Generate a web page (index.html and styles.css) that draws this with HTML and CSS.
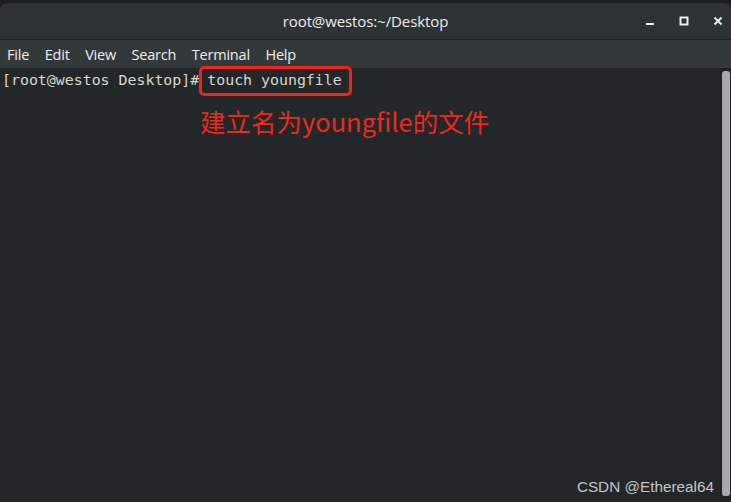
FILE: index.html
```html
<!DOCTYPE html>
<html>
<head>
<meta charset="utf-8">
<link rel="stylesheet" href="styles.css">
</head>
<body>
<div class="window">
  <div class="titlebar">
    <div class="title">root@westos:~/Desktop</div>
    <div class="controls">
      <svg class="ctl" width="14" height="14" viewBox="0 0 14 14"><rect x="3" y="9" width="8" height="2" fill="#eeeeec"/></svg>
      <svg class="ctl" width="14" height="14" viewBox="0 0 14 14"><rect x="3.5" y="3.5" width="7" height="7" fill="none" stroke="#eeeeec" stroke-width="2"/></svg>
      <svg class="ctl" width="14" height="14" viewBox="0 0 14 14"><path d="M3.5 3.5 L10.5 10.5 M10.5 3.5 L3.5 10.5" stroke="#eeeeec" stroke-width="2"/></svg>
    </div>
  </div>
  <div class="menubar">
    <span class="mi">File</span>
    <span class="mi">Edit</span>
    <span class="mi">View</span>
    <span class="mi">Search</span>
    <span class="mi">Terminal</span>
    <span class="mi">Help</span>
  </div>
  <div class="terminal">
    <div class="content">
      <div class="line"><span class="prompt">[root@westos Desktop]#</span><span class="cmd">touch youngfile</span></div>
      <div class="note">建立名为youngfile的文件</div>
    </div>
    <div class="scroll"><div class="thumb"></div></div>
    <div class="watermark">CSDN @Ethereal64</div>
  </div>
</div>
</body>
</html>
```

FILE: styles.css
```css
html, body {
  margin: 0;
  padding: 0;
  background: #1b1d1e;
}
.window {
  width: 731px;
  height: 502px;
  padding-top: 3px;
  box-sizing: border-box;
  display: flex;
  flex-direction: column;
}
.titlebar {
  height: 36px;
  background: #2d3234;
  border-radius: 7px 7px 0 0;
  border-bottom: 1px solid #1c1f20;
  position: relative;
  display: flex;
  align-items: center;
  justify-content: center;
  flex-shrink: 0;
}
.title {
  font-family: "Open Sans", "Noto Sans", sans-serif;
  font-size: 15px;
  color: #eeeeec;
  letter-spacing: -0.1px;
}
.controls {
  position: absolute;
  right: 6px;
  top: 11px;
  display: flex;
  gap: 20px;
}
.ctl { display: block; }
.menubar {
  height: 28px;
  background: #33393b;
  display: flex;
  align-items: center;
  padding-left: 7px;
  flex-shrink: 0;
}
.mi {
  font-family: "Open Sans", "Noto Sans", sans-serif;
  font-size: 14.5px;
  color: #eeeeec;
  margin-right: 15.5px;
  letter-spacing: -0.2px;
}
.terminal {
  flex: 1;
  background: #232729;
  position: relative;
  display: flex;
}
.content {
  flex: 1;
  padding-left: 2px;
}
.line {
  font-family: "DejaVu Sans Mono", monospace;
  font-size: 14.9px;
  color: #d3d7cf;
  line-height: 20px;
  white-space: pre;
  display: flex;
  align-items: flex-start;
  margin-top: -2px;
  position: relative;
}
.prompt {
  padding-top: 4px;
}
.cmd {
  border: 3px solid #f2231b;
  border-radius: 5px;
  padding: 1px 7px 3px 5px;
}
.note {
  font-family: "Noto Sans CJK SC", sans-serif;
  font-size: 25.5px;
  color: #ea2a1d;
  margin-left: 198px;
  margin-top: 9px;
  line-height: 32px;
}
.scroll {
  width: 11px;
  background: #202325;
  padding: 3px 1px 6px 2px;
  box-sizing: border-box;
  display: flex;
}
.thumb {
  flex: 1;
  background: #a8aaab;
  border-radius: 3px;
}
.watermark {
  position: absolute;
  right: 17px;
  bottom: 6px;
  font-family: "Liberation Sans", "Noto Sans", sans-serif;
  font-size: 15.3px;
  color: #c3c5c6;
}
```
